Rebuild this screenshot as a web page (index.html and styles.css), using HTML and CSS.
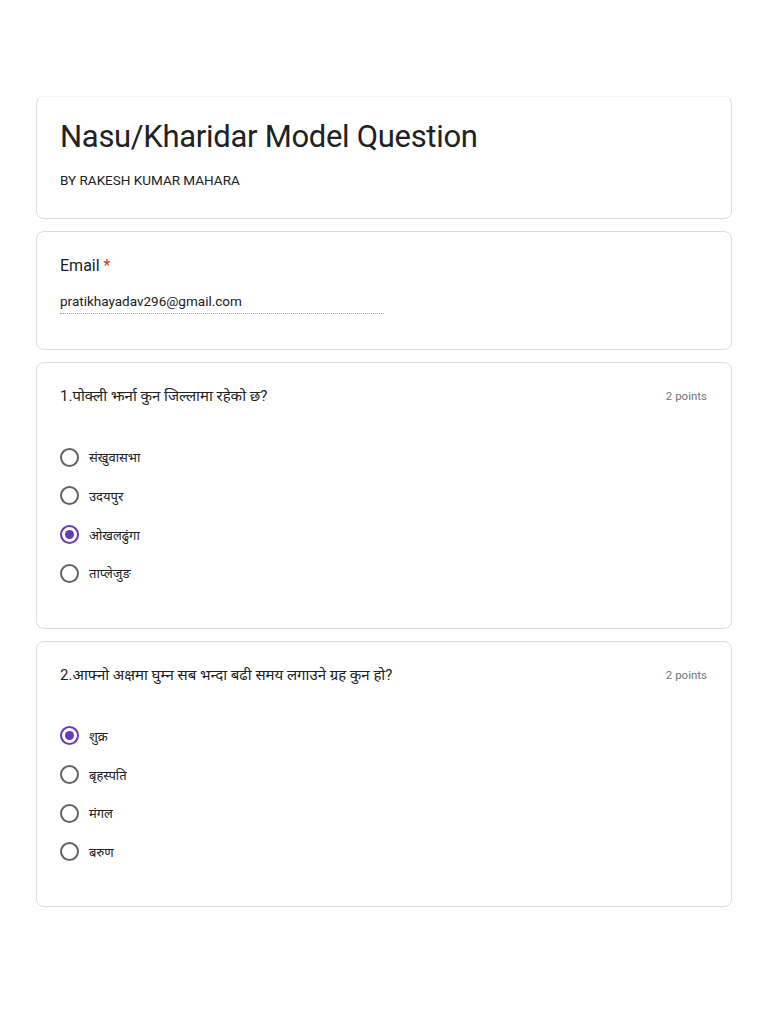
FILE: index.html
```html
<!DOCTYPE html>
<html lang="ne">
<head>
    <meta charset="UTF-8">
    <meta name="viewport" content="width=device-width, initial-scale=1.0">
    <title>Nasu/Kharidar Model Question</title>
    <link rel="stylesheet" href="styles.css">
</head>
<body>
    <div class="form">
        <div class="card header-card">
            <div class="form-title">Nasu/Kharidar Model Question</div>
            <div class="form-desc">BY RAKESH KUMAR MAHARA</div>
        </div>

        <div class="card">
            <div class="q-title">Email <span class="req">*</span></div>
            <div class="answer">pratikhayadav296@gmail.com</div>
        </div>

        <div class="card question">
            <div class="q-head">
                <div class="q-title">1.पोक्ली झर्ना कुन जिल्लामा रहेको छ?</div>
                <div class="points">2 points</div>
            </div>
            <div class="options">
                <div class="option"><span class="radio"></span>संखुवासभा</div>
                <div class="option"><span class="radio"></span>उदयपुर</div>
                <div class="option"><span class="radio checked"></span>ओखलढुंगा</div>
                <div class="option"><span class="radio"></span>ताप्लेजुङ</div>
            </div>
        </div>

        <div class="card question">
            <div class="q-head">
                <div class="q-title">2.आफ्नो अक्षमा घुम्न सब भन्दा बढी समय लगाउने ग्रह कुन हो?</div>
                <div class="points">2 points</div>
            </div>
            <div class="options">
                <div class="option"><span class="radio checked"></span>शुक्र</div>
                <div class="option"><span class="radio"></span>बृहस्पति</div>
                <div class="option"><span class="radio"></span>मंगल</div>
                <div class="option"><span class="radio"></span>बरुण</div>
            </div>
        </div>
    </div>
</body>
</html>
```

FILE: styles.css
```css
body {
    margin: 0;
    padding: 0;
    background: #fff;
    color: #202124;
    font-family: Roboto, "Noto Sans", "Noto Sans Devanagari", sans-serif;
}

.form {
    width: 696px;
    margin: 96px auto 0;
    display: flex;
    flex-direction: column;
    gap: 12px;
}

.card {
    background: #fff;
    border: 1px solid #dadce0;
    border-radius: 8px;
    padding: 22px 23px 35px;
}

.header-card {
    border-top-color: #f1f3f4;
    padding: 20px 23px 28px;
}

.question {
    padding-top: 21px;
}

.form-title {
    font-size: 31px;
    line-height: 40px;
    letter-spacing: -0.3px;
}

.form-desc {
    font-size: 13.5px;
    line-height: 20px;
    margin-top: 13px;
}

.q-head {
    display: flex;
    justify-content: space-between;
    align-items: center;
}

.q-title {
    font-size: 16px;
    line-height: 24px;
}

.q-head .q-title {
    font-size: 15px;
}

.req {
    color: #d93025;
}

.points {
    font-size: 11.5px;
    color: #70757a;
    margin-right: 1px;
}

.answer {
    width: 324px;
    font-size: 13.5px;
    line-height: 20px;
    margin-top: 13px;
    border-bottom: 1px dotted #9aa0a6;
    padding-bottom: 2px;
}

.options {
    margin-top: 30px;
}

.option {
    display: flex;
    align-items: center;
    height: 38.67px;
    font-size: 13px;
}

.radio {
    width: 15px;
    height: 15px;
    border: 2px solid #5f6368;
    border-radius: 50%;
    margin-right: 10px;
    display: flex;
    align-items: center;
    justify-content: center;
    flex-shrink: 0;
}

.radio.checked {
    border-color: #673ab7;
}

.radio.checked::after {
    content: "";
    width: 9px;
    height: 9px;
    border-radius: 50%;
    background: #673ab7;
}
```
